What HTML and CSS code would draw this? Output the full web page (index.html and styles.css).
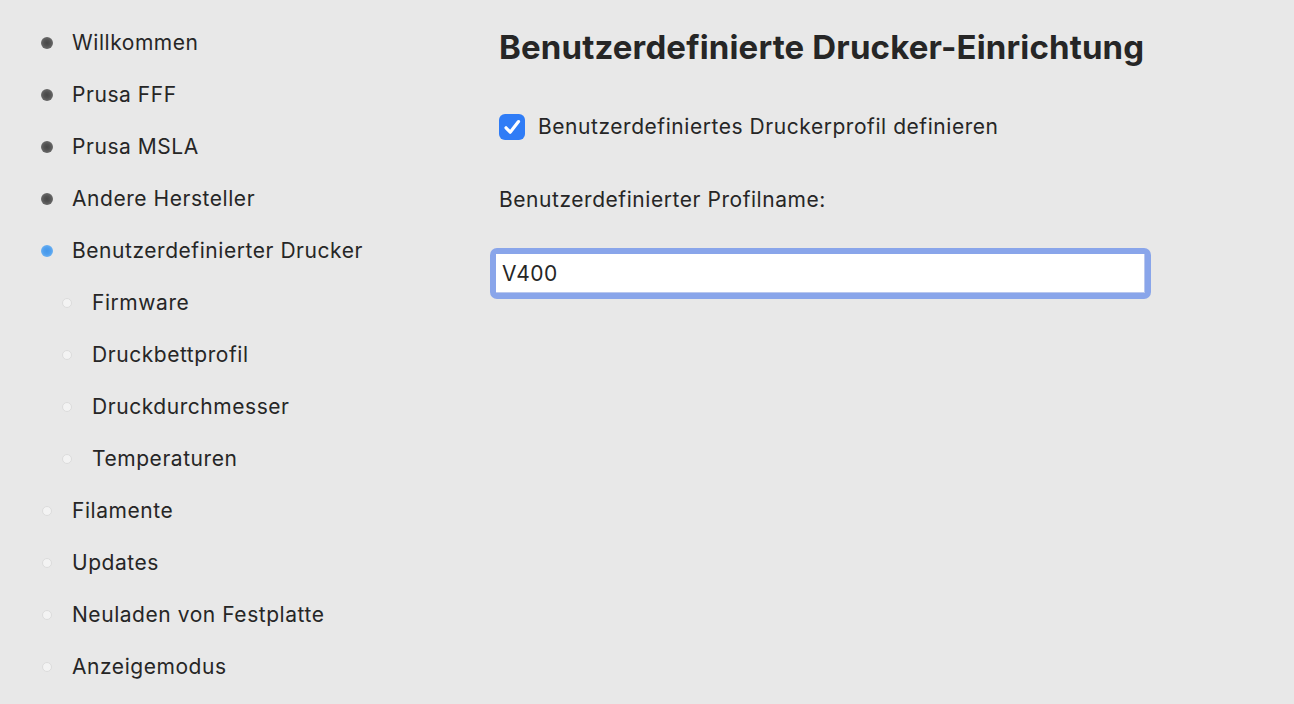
FILE: index.html
```html
<!DOCTYPE html>
<html lang="de">
<head>
<meta charset="utf-8">
<title>Benutzerdefinierte Drucker-Einrichtung</title>
<link rel="stylesheet" href="styles.css">
</head>
<body>
<div class="app">
  <nav class="sidebar">
    <ul class="steps">
      <li class="step done"><span class="dot"></span><span class="label">Willkommen</span></li>
      <li class="step done"><span class="dot"></span><span class="label">Prusa FFF</span></li>
      <li class="step done"><span class="dot"></span><span class="label">Prusa MSLA</span></li>
      <li class="step done"><span class="dot"></span><span class="label">Andere Hersteller</span></li>
      <li class="step active"><span class="dot"></span><span class="label">Benutzerdefinierter Drucker</span></li>
      <li class="step sub"><span class="dot"></span><span class="label">Firmware</span></li>
      <li class="step sub"><span class="dot"></span><span class="label">Druckbettprofil</span></li>
      <li class="step sub"><span class="dot"></span><span class="label">Druckdurchmesser</span></li>
      <li class="step sub"><span class="dot"></span><span class="label">Temperaturen</span></li>
      <li class="step"><span class="dot"></span><span class="label">Filamente</span></li>
      <li class="step"><span class="dot"></span><span class="label">Updates</span></li>
      <li class="step"><span class="dot"></span><span class="label">Neuladen von Festplatte</span></li>
      <li class="step"><span class="dot"></span><span class="label">Anzeigemodus</span></li>
    </ul>
  </nav>
  <main class="content">
    <h1 class="title">Benutzerdefinierte Drucker-Einrichtung</h1>
    <label class="check-row">
      <span class="checkbox">
        <svg viewBox="0 0 26 26" width="26" height="26"><path d="M7 13.8 L11.2 18.2 L19.5 7.6" fill="none" stroke="#fff" stroke-width="3.2" stroke-linecap="round" stroke-linejoin="round"/></svg>
      </span>
      <span class="check-label">Benutzerdefiniertes Druckerprofil definieren</span>
    </label>
    <div class="field-label">Benutzerdefinierter Profilname:</div>
    <div class="input-ring">
      <div class="input">V400</div>
    </div>
  </main>
</div>
</body>
</html>
```
FILE: styles.css
```css
html, body {
  margin: 0;
  padding: 0;
  background: #e8e8e8;
}
body {
  font-family: Inter, "Noto Sans", sans-serif;
  color: #262626;
  width: 1294px;
  height: 704px;
  overflow: hidden;
}
.app {
  display: flex;
}
.sidebar {
  width: 490px;
  flex: none;
}
.steps {
  list-style: none;
  margin: 0;
  padding: 17px 0 0 41px;
}
.step {
  display: flex;
  align-items: center;
  height: 52px;
  font-size: 21px;
  letter-spacing: 0.55px;
  line-height: 28px;
}
.step .dot {
  width: 10px;
  height: 10px;
  border-radius: 50%;
  flex: none;
  margin: 0 20px 0 1px;
  box-sizing: border-box;
  background: #f3f3f3;
  border: 1px solid #dcdcdc;
}
.step.sub {
  padding-left: 20px;
}
.step.done .dot,
.step.active .dot {
  width: 12px;
  height: 12px;
  margin: 0 19px 0 0;
}
.step.done .dot {
  background: radial-gradient(circle at 50% 50%, #474747 0, #525252 35%, #666 65%, #8c8c8c 90%, rgba(140,140,140,0.4) 100%);
  border: none;
}
.step.active .dot {
  background: radial-gradient(circle at 50% 50%, #4597ea 0, #4f9fee 40%, #6cb1f2 75%, #98c7f0 92%, rgba(152,199,240,0.4) 100%);
  border: none;
}
.content {
  flex: 1;
  padding-top: 24px;
}
.title {
  margin: 0 0 0 9px;
  font-size: 33px;
  font-weight: 700;
  letter-spacing: 0.15px;
  line-height: 46px;
  color: #262626;
}
.check-row {
  display: flex;
  align-items: center;
  margin: 43px 0 0 9px;
  height: 28px;
}
.checkbox {
  width: 26px;
  height: 26px;
  border-radius: 6px;
  background: #2f7cf6;
  flex: none;
  display: flex;
  margin-right: 13px;
}
.check-label {
  font-size: 21px;
  letter-spacing: 0.55px;
  line-height: 28px;
}
.field-label {
  margin: 45px 0 0 9px;
  font-size: 21px;
  letter-spacing: 0.55px;
  line-height: 28px;
}
.input-ring {
  margin-top: 34px;
  width: 661px;
  height: 51px;
  box-sizing: border-box;
  padding: 6px;
  border-radius: 7px;
  background: #89a5ea;
}
.input {
  height: 100%;
  box-sizing: border-box;
  background: #fff;
  border-bottom: 1px solid #b9c7ee;
  border-right: 1px solid #b9c7ee;
  font-size: 21px;
  letter-spacing: 0.5px;
  line-height: 39px;
  padding-left: 6px;
}
```
